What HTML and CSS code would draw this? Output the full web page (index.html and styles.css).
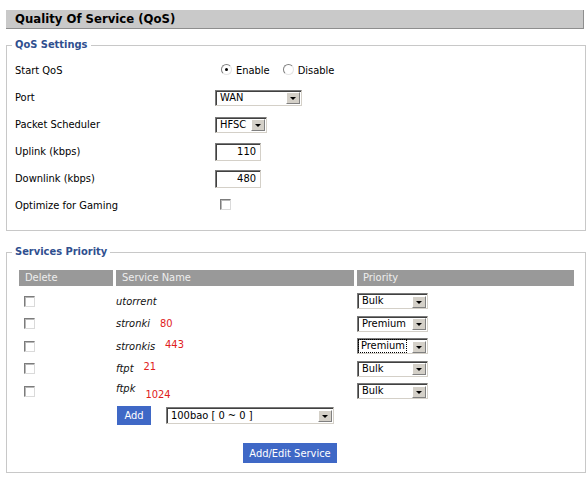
FILE: index.html
```html
<!DOCTYPE html>
<html lang="en">
<head>
  <meta charset="UTF-8">
  <meta name="viewport" content="width=device-width, initial-scale=1.0">
  <title>Quality Of Service (QoS)</title>
  <link rel="stylesheet" href="styles.css">
</head>
<body>
  <div class="page">
    <div class="title">Quality Of Service (QoS)</div>

    <fieldset class="group settings">
      <legend>QoS Settings</legend>

      <div class="row">
        <div class="label">Start QoS</div>
        <div class="field">
          <span class="radio checked"></span><span class="opt">Enable</span>
          <span class="radio second"></span><span class="opt">Disable</span>
        </div>
      </div>

      <div class="row">
        <div class="label">Port</div>
        <div class="field">
          <span class="select port-sel"><span class="value">WAN</span><span class="arrow"></span></span>
        </div>
      </div>

      <div class="row">
        <div class="label">Packet Scheduler</div>
        <div class="field">
          <span class="select sched-sel"><span class="value">HFSC</span><span class="arrow"></span></span>
        </div>
      </div>

      <div class="row">
        <div class="label">Uplink (kbps)</div>
        <div class="field"><span class="input">110</span></div>
      </div>

      <div class="row">
        <div class="label">Downlink (kbps)</div>
        <div class="field"><span class="input">480</span></div>
      </div>

      <div class="row">
        <div class="label">Optimize for Gaming</div>
        <div class="field"><span class="check gaming"></span></div>
      </div>
    </fieldset>

    <fieldset class="group services">
      <legend>Services Priority</legend>

      <div class="table">
        <div class="srow head">
          <div class="th">Delete</div>
          <div class="th">Service Name</div>
          <div class="th">Priority</div>
        </div>

        <div class="srow">
          <div class="cell"><span class="check"></span></div>
          <div class="cell"><span class="name">utorrent</span></div>
          <div class="cell"><span class="select prio-sel"><span class="value">Bulk</span><span class="arrow"></span></span></div>
        </div>

        <div class="srow">
          <div class="cell"><span class="check"></span></div>
          <div class="cell"><span class="name">stronki</span><span class="port">80</span></div>
          <div class="cell"><span class="select prio-sel"><span class="value">Premium</span><span class="arrow"></span></span></div>
        </div>

        <div class="srow">
          <div class="cell"><span class="check"></span></div>
          <div class="cell"><span class="name">stronkis</span><span class="port up">443</span></div>
          <div class="cell"><span class="select prio-sel"><span class="value focus">Premium</span><span class="arrow"></span></span></div>
        </div>

        <div class="srow">
          <div class="cell"><span class="check"></span></div>
          <div class="cell"><span class="name">ftpt</span><span class="port up">21</span></div>
          <div class="cell"><span class="select prio-sel"><span class="value">Bulk</span><span class="arrow"></span></span></div>
        </div>

        <div class="srow">
          <div class="cell"><span class="check"></span></div>
          <div class="cell"><span class="name up">ftpk</span><span class="port down">1024</span></div>
          <div class="cell"><span class="select prio-sel"><span class="value">Bulk</span><span class="arrow"></span></span></div>
        </div>

        <div class="srow add-row">
          <div class="cell"></div>
          <div class="cell">
            <button class="btn add">Add</button>
            <span class="select svc-sel"><span class="value">100bao [ 0 ~ 0 ]</span><span class="arrow"></span></span>
          </div>
          <div class="cell"></div>
        </div>
      </div>

      <div class="actions">
        <button class="btn edit">Add/Edit Service</button>
      </div>
    </fieldset>
  </div>
</body>
</html>
```

FILE: styles.css
```css
* {
  box-sizing: border-box;
}

body {
  margin: 0;
  background: #fff;
  color: #000;
  font-family: "DejaVu Sans Condensed", "Liberation Sans", sans-serif;
  font-size: 11px;
}

.page {
  width: 588px;
  padding: 10px 2px 0 6px;
}

.title {
  width: 578px;
  height: 19px;
  line-height: 18px;
  padding-left: 9px;
  background: #c9c9c9;
  border-bottom: 1px solid #8e8e8e;
  border-right: 1px solid #8e8e8e;
  font-size: 13px;
  font-weight: bold;
}

/* fieldsets */
.group {
  width: 580px;
  margin: 0;
  border: 1px solid #c8c8c8;
  padding: 6px 0 11px 8px;
}

.group legend {
  margin-left: -3px;
  padding: 0 3px;
  line-height: 12px;
  color: #2f4f8f;
  font-weight: bold;
}

.settings {
  margin-top: 10px;
}

.services {
  margin-top: 15px;
  padding-top: 12px;
  padding-bottom: 9px;
}

.row {
  display: flex;
  align-items: center;
  height: 27px;
}

.label {
  width: 200px;
}

.field {
  display: flex;
  align-items: center;
}

/* windows classic controls */
.radio {
  position: relative;
  width: 11px;
  height: 11px;
  margin: 0 4px 3px 6px;
  border-radius: 50%;
  border: 1px solid;
  border-color: #808080 #e4e4e4 #e4e4e4 #808080;
  background: #fff;
}

.radio.second {
  margin-left: 13px;
}

.radio.checked::after {
  content: "";
  position: absolute;
  left: 3px;
  top: 3px;
  width: 3px;
  height: 3px;
  border-radius: 50%;
  background: #000;
}

.select {
  display: inline-flex;
  align-items: center;
  justify-content: space-between;
  height: 16px;
  border: 1px solid;
  border-color: #7a7a7a #d4d0c8 #d4d0c8 #7a7a7a;
  box-shadow: inset 1px 1px 0 #404040;
  background: #fff;
}

.select .value {
  padding: 0 1px 0 3px;
  line-height: 12px;
  margin-left: 1px;
}

.select .value.focus {
  padding-left: 2px;
  outline: 1px dotted #000;
}

.select .arrow {
  display: flex;
  align-items: center;
  justify-content: center;
  width: 14px;
  height: 12px;
  margin: 1px 1px 0 0;
  background: #d4d0c8;
  border: 1px solid;
  border-color: #fff #808080 #808080 #fff;
}

.select .arrow::after {
  content: "";
  border-left: 3px solid transparent;
  border-right: 3px solid transparent;
  border-top: 3px solid #000;
  margin-top: 1px;
}

.port-sel { width: 87px; }
.sched-sel { width: 52px; }
.prio-sel { width: 71px; }
.svc-sel { width: 168px; height: 17px; }

.input {
  display: block;
  width: 46px;
  height: 18px;
  line-height: 16px;
  padding-right: 4px;
  text-align: right;
  border: 1px solid;
  border-color: #7a7a7a #d4d0c8 #d4d0c8 #7a7a7a;
  box-shadow: inset 1px 1px 0 #404040;
}

.check {
  display: block;
  width: 11px;
  height: 11px;
  border: 1px solid;
  border-color: #7c7c7c #dadada #dadada #7c7c7c;
  box-shadow: inset 1px 1px 0 #b8b8b8;
  background: #fff;
}

.check.gaming {
  margin: 0 0 3px 5px;
}

/* services table */
.table {
  margin-left: 4px;
}

.srow {
  display: grid;
  grid-template-columns: 94px 238px 217px;
  column-gap: 3px;
  height: 22.5px;
  align-items: center;
}

.srow.head {
  height: 16px;
  margin-bottom: 4px;
  align-items: stretch;
}

.th {
  background: #999;
  color: #eee;
  line-height: 16px;
  padding-left: 6px;
}

.cell {
  display: flex;
  align-items: center;
}

.cell .check {
  margin-left: 5px;
}

.name {
  font-style: italic;
  color: #111;
}

.name.up {
  margin-top: -6px;
}

.port {
  margin-left: 10px;
  color: #e0201c;
}

.port.up {
  margin-top: -4px;
}

.port.down {
  margin-top: 6px;
}

.add-row {
  height: 19px;
  margin-top: 3.5px;
}

.btn {
  height: 19px;
  border: none;
  padding: 0;
  background: #3f68c6;
  color: #fff;
  font-family: inherit;
  font-size: 11px;
}

.btn.add {
  width: 34px;
  margin: 0 15px 0 1px;
}

.actions {
  padding: 18px 0 0 228px;
}

.btn.edit {
  width: 94px;
  height: 20px;
}
```
